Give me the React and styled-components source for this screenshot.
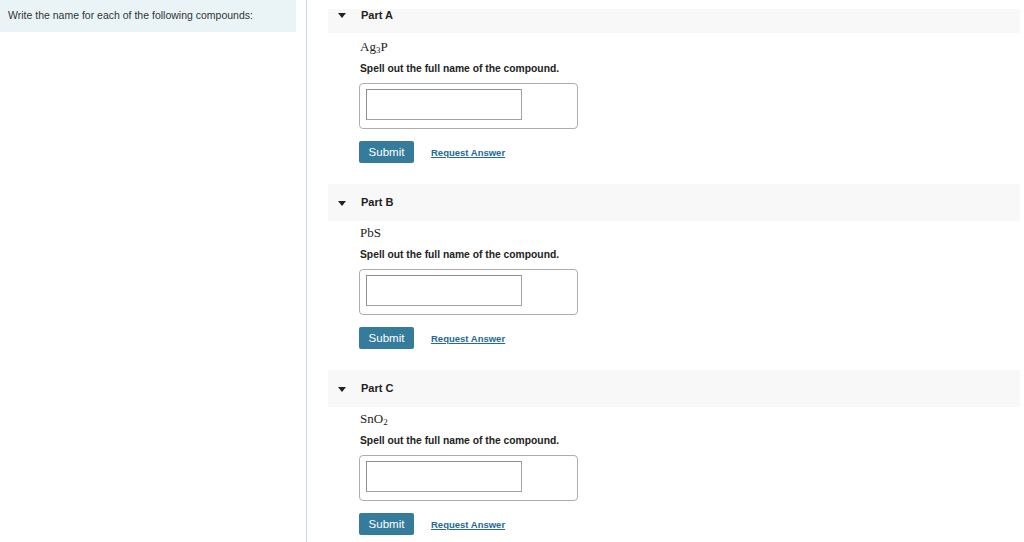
import React from 'react'
import styled, { createGlobalStyle } from 'styled-components'

const GlobalStyle = createGlobalStyle`
  html, body {
    margin: 0;
    padding: 0;
    background: #ffffff;
    overflow: hidden;
  }
  body {
    font-family: "Liberation Sans", Arial, Helvetica, sans-serif;
    color: #333333;
  }
`

const parts = [
  { label: 'Part A', formula: <>Ag<sub>3</sub>P</>, first: true },
  { label: 'Part B', formula: <>PbS</> },
  { label: 'Part C', formula: <>SnO<sub>2</sub></> },
]

function Part({ label, formula, first }) {
  return (
    <Section>
      <PartHeader $first={first}>
        <Caret $first={first} />
        <PartTitle>{label}</PartTitle>
      </PartHeader>
      <PartBody>
        <Formula $first={first}>{formula}</Formula>
        <Instruction>Spell out the full name of the compound.</Instruction>
        <AnswerBox>
          <AnswerInput type="text" />
        </AnswerBox>
        <Actions>
          <SubmitButton>Submit</SubmitButton>
          <RequestLink href="#">Request Answer</RequestLink>
        </Actions>
      </PartBody>
    </Section>
  )
}

export default function App() {
  return (
    <Page>
      <GlobalStyle />
      <Sidebar>
        <Prompt>Write the name for each of the following compounds:</Prompt>
      </Sidebar>
      <Main>
        {parts.map(p => (
          <Part key={p.label} {...p} />
        ))}
      </Main>
    </Page>
  )
}

const Page = styled.div`
  display: flex;
  width: 1024px;
  height: 542px;
`

const Sidebar = styled.aside`
  width: 296px;
  margin-right: 10px;
  flex-shrink: 0;
`

const Prompt = styled.div`
  height: 32px;
  background: #eaf4f7;
  padding-left: 8px;
  display: flex;
  align-items: center;
  font-size: 10.5px;
  color: #333;
  box-sizing: border-box;
  padding-bottom: 2px;
`

const Main = styled.main`
  flex: 1;
  border-left: 1px solid #c9d8e2;
  padding: 0 4px 0 21px;
  display: flex;
  flex-direction: column;
`

const Section = styled.section`
  display: flex;
  flex-direction: column;
  padding-bottom: 21px;
`

const PartHeader = styled.div`
  display: flex;
  align-items: ${p => (p.$first ? 'flex-start' : 'center')};
  height: ${p => (p.$first ? '24px' : '37px')};
  margin-top: ${p => (p.$first ? '9px' : '0')};
  background: #f8f8f8;
  padding-left: 10px;
  gap: 15px;
  box-sizing: border-box;
`

const Caret = styled.span`
  width: 0;
  height: 0;
  border-left: 4px solid transparent;
  border-right: 4px solid transparent;
  border-top: 5px solid #222;
  margin-top: ${p => (p.$first ? '4px' : '1px')};
`

const PartTitle = styled.span`
  font-size: 11px;
  font-weight: bold;
  color: #222;
  line-height: 13px;
`

const PartBody = styled.div`
  padding-left: 31px;
  display: flex;
  flex-direction: column;
  align-items: flex-start;
`

const Formula = styled.div`
  font-family: "Liberation Serif", "Times New Roman", serif;
  font-size: 13px;
  line-height: 16px;
  color: #222;
  margin-top: ${p => (p.$first ? '6px' : '4px')};
  margin-left: 1px;

  sub {
    font-size: 9px;
    line-height: 0;
    vertical-align: -2px;
  }
`

const Instruction = styled.div`
  font-size: 10.3px;
  font-weight: bold;
  line-height: 14px;
  color: #222;
  margin-top: 7px;
  margin-left: 1px;
`

const AnswerBox = styled.div`
  width: 219px;
  height: 46px;
  margin-top: 7px;
  border: 1px solid #adadad;
  border-radius: 4px;
  padding: 5px 6px;
  box-sizing: border-box;
`

const AnswerInput = styled.input`
  display: block;
  width: 156px;
  height: 31px;
  box-sizing: border-box;
  border: 1px solid #a3a3a3;
  border-top-color: #8f8f8f;
  border-left-color: #8f8f8f;
  background: #fff;
  margin: 0;
  padding: 0 4px;
  outline: none;
`

const Actions = styled.div`
  display: flex;
  align-items: center;
  gap: 17px;
  margin-top: 12px;
`

const SubmitButton = styled.button`
  width: 55px;
  height: 22px;
  background: #357b9c;
  color: #fff;
  border: none;
  border-radius: 2px;
  font-family: "Liberation Sans", Arial, sans-serif;
  font-size: 11.5px;
  padding: 0;
  cursor: pointer;
`

const RequestLink = styled.a`
  font-size: 9.5px;
  font-weight: bold;
  color: #24699a;
  text-decoration: underline;
`
